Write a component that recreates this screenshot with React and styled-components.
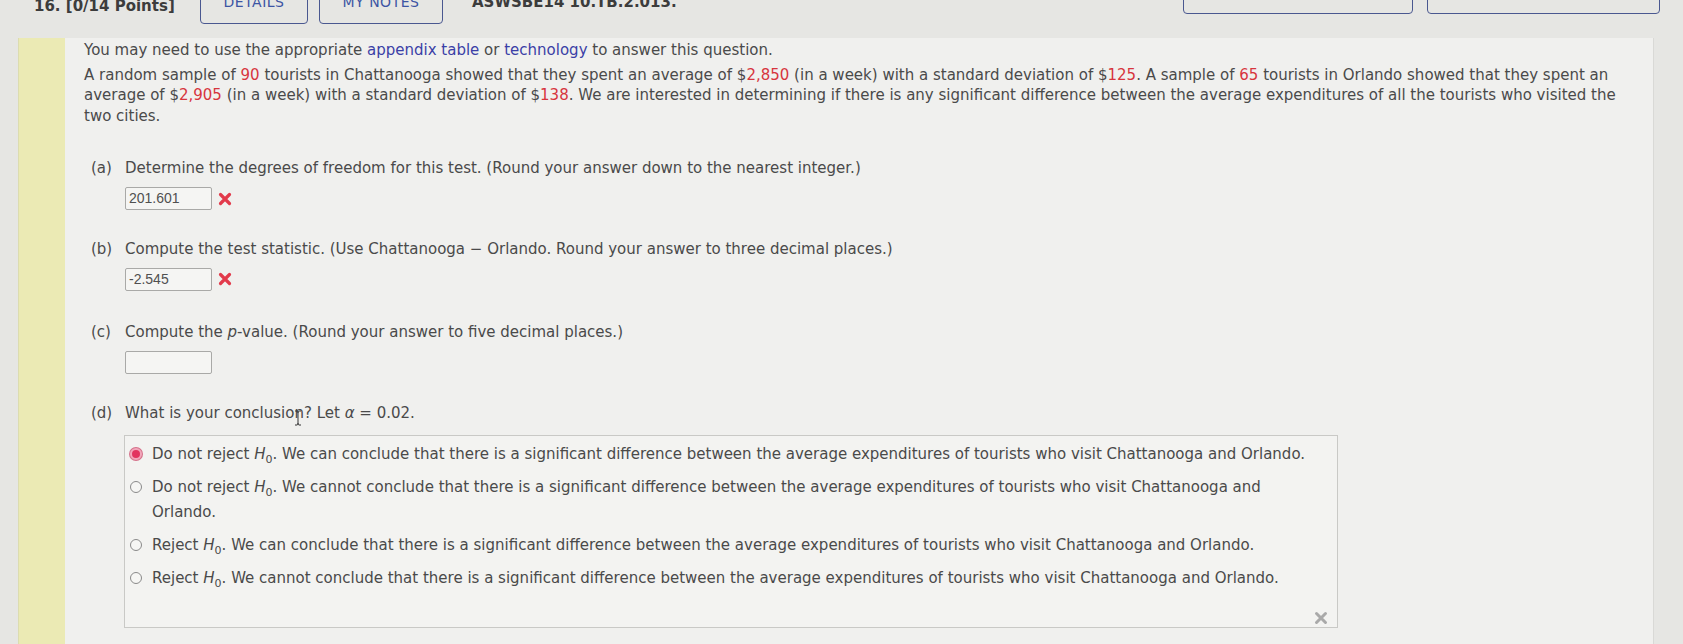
import React from 'react';
import styled, { createGlobalStyle } from 'styled-components';

const GlobalStyle = createGlobalStyle`
  body {
    margin: 0;
    background: #e6e6e3;
    font-family: "DejaVu Sans", Verdana, sans-serif;
  }
`;

const Page = styled.div`
  width: 1683px;
  height: 644px;
  overflow: hidden;
  display: flex;
  flex-direction: column;
  background: #e6e6e3;
  color: #4a4a4a;
`;

const Header = styled.div`
  height: 38px;
  flex: none;
  display: flex;
  align-items: flex-start;
  padding-left: 34px;
  padding-right: 23px;
`;

const QTitle = styled.div`
  margin-top: -3px;
  font-size: 15px;
  line-height: 18px;
  font-weight: bold;
  color: #3c3c3c;
  width: 166px;
`;

const HeadButton = styled.div`
  margin-top: ${({ top }) => top}px;
  height: 42px;
  width: ${({ w }) => w}px;
  margin-left: ${({ gap }) => gap}px;
  box-sizing: border-box;
  border: 1.5px solid #4a5890;
  border-radius: 4px;
  display: flex;
  align-items: flex-end;
  justify-content: center;
  padding-bottom: 13px;
  font-size: 14px;
  line-height: 16px;
  color: #3d55a3;
  letter-spacing: 0.5px;
`;

const Code = styled.div`
  margin-top: -8px;
  margin-left: 29px;
  font-size: 15px;
  line-height: 20px;
  font-weight: bold;
  color: #3c3c3c;
`;

const Spacer = styled.div`
  flex: 1;
`;

const Body = styled.div`
  flex: 1;
  display: flex;
`;

const Strip = styled.div`
  margin-left: 18px;
  width: 46px;
  background: #ebeab4;
  border-left: 1px solid #dcdcb0;
`;

const Panel = styled.div`
  width: 1589px;
  box-sizing: border-box;
  background: #f0f0ee;
  border-right: 1px solid #d9d9d6;
  padding: 2px 10px 0 19px;
  font-size: 15px;
  line-height: 20.5px;
`;

const Para = styled.p`
  margin: 0 0 ${({ mb }) => mb}px 0;
`;

const Link = styled.span`
  color: #3b3fa6;
`;

const Red = styled.span`
  color: #d7353d;
`;

const Part = styled.div`
  display: flex;
  padding-left: 7px;
  margin-top: ${({ mt }) => mt}px;
`;

const PartLabel = styled.div`
  width: 34px;
  flex: none;
`;

const PartBody = styled.div`
  flex: 1;
`;

const AnswerRow = styled.div`
  display: flex;
  align-items: center;
  margin-top: 8px;
  height: 24px;
`;

const Input = styled.div`
  width: 87px;
  height: 23px;
  box-sizing: border-box;
  border: 1px solid #a9a9a7;
  border-radius: 2px;
  background: #f5f5f3;
  font-family: "Liberation Sans", Arial, sans-serif;
  font-size: 14px;
  line-height: 21px;
  padding-left: 3px;
  color: #505050;
`;

const WrongMark = styled.svg`
  margin-left: 6px;
`;

const Em = styled.i`
  font-style: italic;
`;

const Sub = styled.sub`
  font-size: 11px;
  vertical-align: -4px;
  line-height: 0;
`;

const Choices = styled.div`
  margin-top: 12px;
  margin-left: -1px;
  width: 1214px;
  box-sizing: border-box;
  border: 1px solid #c9c9c6;
  background: #f3f3f1;
  padding: 6px 9px 0 5px;
`;

const Choice = styled.div`
  display: flex;
  align-items: flex-start;
  margin-bottom: 8px;
  padding-right: 16px;
  line-height: 25px;
`;

const Radio = styled.span`
  flex: none;
  width: 12px;
  height: 12px;
  margin-top: 6px;
  margin-right: 10px;
  box-sizing: border-box;
  border-radius: 50%;
  border: ${({ on }) => (on ? '2px solid #f2a6ba' : '1px solid #8a8a8a')};
  background: ${({ on }) => (on ? '#e2335f' : '#f6f6f4')};
  box-shadow: ${({ on }) => (on ? '0 0 0 1px #d5718a' : 'none')};
`;

const ChoiceText = styled.span`
  flex: 1;
`;

const Footer = styled.div`
  display: flex;
  justify-content: flex-end;
  margin-top: 20px;
  height: 16px;
`;

const Cursor = styled.span`
  position: relative;
`;

const CursorIcon = styled.svg`
  position: absolute;
  left: 9px;
  top: 6px;
`;

const X = () => (
  <WrongMark width="14" height="14" viewBox="0 0 14 14">
    <path d="M2.5 2.5 L11.5 11.5 M11.5 2.5 L2.5 11.5" stroke="#e23a4b" strokeWidth="3.2" strokeLinecap="round" />
  </WrongMark>
);

const H0 = () => (
  <>
    <Em>H</Em>
    <Sub>0</Sub>
  </>
);

const choices = [
  { on: true, pre: 'Do not reject', text: 'We can conclude that there is a significant difference between the average expenditures of tourists who visit Chattanooga and Orlando.' },
  { on: false, pre: 'Do not reject', text: 'We cannot conclude that there is a significant difference between the average expenditures of tourists who visit Chattanooga and Orlando.' },
  { on: false, pre: 'Reject', text: 'We can conclude that there is a significant difference between the average expenditures of tourists who visit Chattanooga and Orlando.' },
  { on: false, pre: 'Reject', text: 'We cannot conclude that there is a significant difference between the average expenditures of tourists who visit Chattanooga and Orlando.' },
];

const App = () => {
  return (
    <>
      <GlobalStyle />
      <Page>
        <Header>
          <QTitle>16. [0/14 Points]</QTitle>
          <HeadButton w={108} gap={0} top={-18}>DETAILS</HeadButton>
          <HeadButton w={124} gap={11} top={-18}>MY NOTES</HeadButton>
          <Code>ASWSBE14 10.TB.2.013.</Code>
          <Spacer />
          <HeadButton w={230} gap={0} top={-28} />
          <HeadButton w={233} gap={14} top={-28} />
        </Header>
        <Body>
          <Strip />
          <Panel>
            <Para mb={4}>
              You may need to use the appropriate <Link>appendix table</Link> or <Link>technology</Link> to answer this question.
            </Para>
            <Para mb={0}>
              A random sample of <Red>90</Red> tourists in Chattanooga showed that they spent an average of $<Red>2,850</Red> (in a week) with a standard deviation of $<Red>125</Red>. A sample of <Red>65</Red> tourists in Orlando showed that they spent an average of $<Red>2,905</Red> (in a week) with a standard deviation of $<Red>138</Red>. We are interested in determining if there is any significant difference between the average expenditures of all the tourists who visited the two cities.
            </Para>

            <Part mt={32}>
              <PartLabel>(a)</PartLabel>
              <PartBody>
                Determine the degrees of freedom for this test. (Round your answer down to the nearest integer.)
                <AnswerRow>
                  <Input>201.601</Input>
                  <X />
                </AnswerRow>
              </PartBody>
            </Part>

            <Part mt={28}>
              <PartLabel>(b)</PartLabel>
              <PartBody>
                Compute the test statistic. (Use Chattanooga − Orlando. Round your answer to three decimal places.)
                <AnswerRow>
                  <Input>-2.545</Input>
                  <X />
                </AnswerRow>
              </PartBody>
            </Part>

            <Part mt={31}>
              <PartLabel>(c)</PartLabel>
              <PartBody>
                Compute the <Em>p</Em>-value. (Round your answer to five decimal places.)
                <AnswerRow>
                  <Input />
                </AnswerRow>
              </PartBody>
            </Part>

            <Part mt={28}>
              <PartLabel>(d)</PartLabel>
              <PartBody>
                What is your conclusi
                <Cursor>
                  on
                  <CursorIcon width="8" height="16" viewBox="0 0 8 16">
                    <path d="M1 1 H3 Q4 1 4 3 V13 Q4 15 3 15 H1 M7 1 H5 Q4 1 4 3 M4 13 Q4 15 5 15 H7" stroke="#333" strokeWidth="1" fill="none" />
                  </CursorIcon>
                </Cursor>
                ? Let <Em>α</Em> = 0.02.
                <Choices>
                  {choices.map((c, i) => (
                    <Choice key={i}>
                      <Radio on={c.on} />
                      <ChoiceText>
                        {c.pre} <H0 />. {c.text}
                      </ChoiceText>
                    </Choice>
                  ))}
                  <Footer>
                    <svg width="14" height="14" viewBox="0 0 14 14">
                      <path d="M2.5 2.5 L11.5 11.5 M11.5 2.5 L2.5 11.5" stroke="#a9a9a9" strokeWidth="3" strokeLinecap="round" />
                    </svg>
                  </Footer>
                </Choices>
              </PartBody>
            </Part>
          </Panel>
        </Body>
      </Page>
    </>
  );
};

export default App;
